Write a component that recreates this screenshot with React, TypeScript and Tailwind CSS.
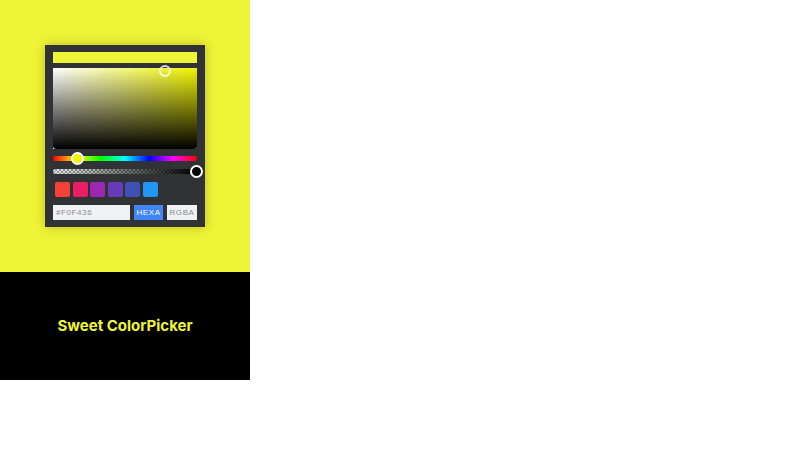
import React from 'react'

const swatches = ['#F44336', '#E91E63', '#9C27B0', '#673AB7', '#3F51B5', '#2196F3']

export default function App() {
  return (
    <div className="h-[450px] w-[800px] bg-white" style={{ fontFamily: 'Inter, "Liberation Sans", sans-serif' }}>
      <div className="flex h-[272px] w-[250px] bg-[#f0f436] pl-[45px] pt-[45px]">
        <div className="flex h-[182px] w-[160px] flex-col bg-[#303236] px-2 pt-[7px] shadow-[0_0_10px_rgba(0,0,0,0.25)]">
          {/* preview */}
          <div className="h-[11px] w-full bg-[#f0f436]" />

          {/* saturation */}
          <div className="relative mt-[5px] h-[81px] w-full rounded-b-[3px] bg-[#f0f400]">
            <div className="absolute inset-0 bg-gradient-to-r from-white to-transparent" />
            <div className="absolute inset-0 rounded-b-[3px] bg-gradient-to-b from-transparent to-black" />
            <div className="absolute left-[106px] top-[-3px] h-[12px] w-[12px] rounded-full border-2 border-white/80" />
          </div>

          {/* hue */}
          <div className="relative mt-[7px] h-[5px] w-full rounded-full bg-[linear-gradient(to_right,#f00,#ff0,#0f0,#0ff,#00f,#f0f,#f00)]">
            <div className="absolute left-[18px] top-[-4px] h-[13px] w-[13px] rounded-full border-2 border-white bg-[#f0f400]" />
          </div>

          {/* alpha */}
          <div className="relative mt-[8px] h-[5px] w-full rounded-full bg-[repeating-conic-gradient(#999_0_25%,#eee_0_50%)] bg-[length:4px_4px]">
            <div className="absolute inset-0 rounded-full bg-gradient-to-r from-transparent to-black" />
            <div className="absolute right-[-6px] top-[-4px] h-[13px] w-[13px] rounded-full border-2 border-white bg-black" />
          </div>

          {/* swatches */}
          <div className="mt-[8px] flex gap-[2.5px] pl-[2px]">
            {swatches.map((c) => (
              <div key={c} className="h-[15px] w-[15px] rounded-[2px]" style={{ background: c }} />
            ))}
          </div>

          {/* inputs */}
          <div
            className="mt-[8px] flex h-[15px] gap-1 text-[8px] font-normal tracking-[0.6px]"
            style={{ fontFamily: '"Liberation Sans", Arial, sans-serif' }}
          >
            <div className="flex flex-1 items-center bg-[#f0f1f3] pl-[3px] text-[#8a8d92]">#F0F436</div>
            <div className="flex w-[29px] items-center justify-center bg-[#4285f4] text-white">HEXA</div>
            <div className="flex w-[30px] items-center justify-center bg-[#f0f1f3] text-[#8a8d92]">RGBA</div>
          </div>
        </div>
      </div>
      <div className="flex h-[108px] w-[250px] items-center justify-center bg-black">
        <span className="text-[15px] font-bold text-[#f0f436]">Sweet ColorPicker</span>
      </div>
    </div>
  )
}
